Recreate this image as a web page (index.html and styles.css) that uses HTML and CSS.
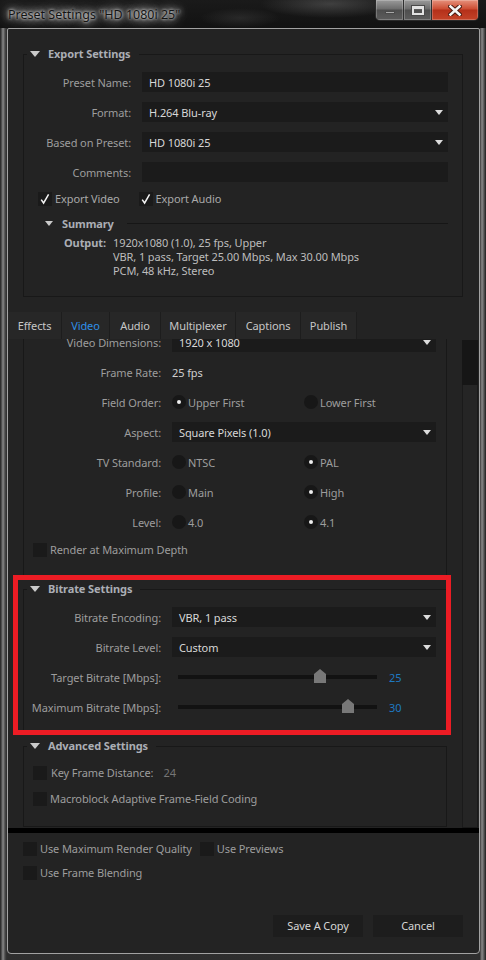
FILE: index.html
```html
<!DOCTYPE html>
<html>
<head>
<meta charset="utf-8">
<title>Preset Settings</title>
<link rel="stylesheet" href="styles.css">
</head>
<body>
<div class="window">
  <div class="titlebar">
    <div class="title">Preset Settings "HD 1080i 25"</div>
    <div class="caption">
      <div class="cb cb-min"><i class="min-ico"></i></div>
      <div class="cb cb-max"><i class="max-ico"></i></div>
      <div class="cb cb-close">
        <svg width="14" height="11" viewBox="0 0 14 11"><path d="M2.5 1.5 L11.5 9.5 M11.5 1.5 L2.5 9.5" stroke="#4a1a10" stroke-width="4.6" stroke-linecap="square"/><path d="M2.5 1.5 L11.5 9.5 M11.5 1.5 L2.5 9.5" stroke="#f4f4f4" stroke-width="2.6" stroke-linecap="square"/></svg>
      </div>
    </div>
  </div>

  <div class="client">
    <fieldset class="group export">
      <legend class="legend"><span class="tri"></span>Export Settings</legend>
      <div class="rows">
        <div class="row"><span class="lbl">Preset Name:</span><div class="field">HD 1080i 25</div></div>
        <div class="row"><span class="lbl">Format:</span><div class="field">H.264 Blu-ray<span class="arrow"></span></div></div>
        <div class="row"><span class="lbl">Based on Preset:</span><div class="field">HD 1080i 25<span class="arrow"></span></div></div>
        <div class="row"><span class="lbl">Comments:</span><div class="field"></div></div>
      </div>
      <div class="export-checks">
        <div class="chk"><span class="box"><svg width="14" height="14" viewBox="0 0 14 14"><path d="M3.2 7.6 L5.6 11 L10.6 2.4" fill="none" stroke="#f2f2f2" stroke-width="1.5"/></svg></span>Export Video</div>
        <div class="chk"><span class="box"><svg width="14" height="14" viewBox="0 0 14 14"><path d="M3.2 7.6 L5.6 11 L10.6 2.4" fill="none" stroke="#f2f2f2" stroke-width="1.5"/></svg></span>Export Audio</div>
      </div>
      <div class="summary">
        <div class="summary-head"><span class="tri small"></span><span class="bold">Summary</span><span class="rule"></span></div>
        <div class="output">
          <span class="out-lbl">Output:</span>
          <div class="out-lines">
            <div>1920x1080 (1.0), 25 fps, Upper</div>
            <div>VBR, 1 pass, Target 25.00 Mbps, Max 30.00 Mbps</div>
            <div>PCM, 48 kHz, Stereo</div>
          </div>
        </div>
      </div>
    </fieldset>

    <div class="tabs">
      <div class="tab t1">Effects</div>
      <div class="tab t2 active">Video</div>
      <div class="tab t3">Audio</div>
      <div class="tab t4">Multiplexer</div>
      <div class="tab t5">Captions</div>
      <div class="tab t6">Publish</div>
    </div>

    <div class="panel">
      <div class="scroll">
        <div class="vgroup">
          <div class="rows vrows">
            <div class="row"><span class="lbl">Video Dimensions:</span><div class="field">1920 x 1080<span class="arrow"></span></div></div>
            <div class="row"><span class="lbl">Frame Rate:</span><span class="val">25 fps</span></div>
            <div class="row"><span class="lbl">Field Order:</span>
              <div class="radios"><div class="radio"><span class="dot on"></span>Upper First</div><div class="radio"><span class="dot"></span>Lower First</div></div></div>
            <div class="row"><span class="lbl">Aspect:</span><div class="field">Square Pixels (1.0)<span class="arrow"></span></div></div>
            <div class="row"><span class="lbl">TV Standard:</span>
              <div class="radios"><div class="radio"><span class="dot"></span>NTSC</div><div class="radio"><span class="dot on"></span>PAL</div></div></div>
            <div class="row"><span class="lbl">Profile:</span>
              <div class="radios"><div class="radio"><span class="dot"></span>Main</div><div class="radio"><span class="dot on"></span>High</div></div></div>
            <div class="row"><span class="lbl">Level:</span>
              <div class="radios"><div class="radio"><span class="dot"></span>4.0</div><div class="radio"><span class="dot on"></span>4.1</div></div></div>
          </div>
          <div class="chk inner-chk render"><span class="box"></span>Render at Maximum Depth</div>
        </div>

        <fieldset class="group bitrate">
          <legend class="legend"><span class="tri"></span>Bitrate Settings</legend>
          <div class="rows vrows">
            <div class="row"><span class="lbl">Bitrate Encoding:</span><div class="field">VBR, 1 pass<span class="arrow"></span></div></div>
            <div class="row"><span class="lbl">Bitrate Level:</span><div class="field">Custom<span class="arrow"></span></div></div>
            <div class="row"><span class="lbl">Target Bitrate [Mbps]:</span>
              <div class="slider-wrap"><div class="slider"><svg class="knob" style="left:136px" width="12" height="14" viewBox="0 0 12 14"><path d="M0 5 L6 0 L12 5 V14 H0 Z" fill="#787878"/></svg></div><span class="sval">25</span></div></div>
            <div class="row"><span class="lbl">Maximum Bitrate [Mbps]:</span>
              <div class="slider-wrap"><div class="slider"><svg class="knob" style="left:164px" width="12" height="14" viewBox="0 0 12 14"><path d="M0 5 L6 0 L12 5 V14 H0 Z" fill="#787878"/></svg></div><span class="sval">30</span></div></div>
          </div>
        </fieldset>

        <fieldset class="group advanced">
          <legend class="legend"><span class="tri"></span>Advanced Settings</legend>
          <div class="adv-rows">
            <div class="chk inner-chk"><span class="box"></span><span class="kfd">Key Frame Distance:</span><span class="dim">24</span></div>
            <div class="chk inner-chk"><span class="box"></span>Macroblock Adaptive Frame-Field Coding</div>
          </div>
        </fieldset>
      </div>
      <div class="scrollbar"><div class="thumb"></div><div class="track"></div></div>
    </div>

    <div class="bottom">
      <div class="brow">
        <div class="chk"><span class="box"></span>Use Maximum Render Quality</div>
        <div class="chk"><span class="box"></span>Use Previews</div>
      </div>
      <div class="brow second">
        <div class="chk"><span class="box"></span>Use Frame Blending</div>
      </div>
      <div class="buttons">
        <div class="btn">Save A Copy</div>
        <div class="btn">Cancel</div>
      </div>
    </div>
  </div>

  <div class="annot"></div>
</div>
</body>
</html>
```
FILE: styles.css
```css
* { box-sizing: border-box; }
html, body { margin: 0; padding: 0; }
body {
  width: 486px;
  height: 960px;
  overflow: hidden;
  font-family: "Noto Sans", "Open Sans", sans-serif;
  font-size: 11px;
  letter-spacing: -0.1px;
  color: #9d9d9d;
  background: #2c2c2c;
}

.window {
  position: relative;
  width: 486px;
  height: 960px;
  display: flex;
  flex-direction: column;
  padding: 0 6px 6px 7px;
  background:
    linear-gradient(90deg, #1e1e1e 0, #5e5e5e 2px, #8a8a8a 3px, #4a4a4a 5px, #2a2a2a 7px, transparent 7px, transparent 480px, #3a3a3a 480px, #8a8a8a 482px, #555 484px, #1e1e1e 486px),
    linear-gradient(180deg, #2a2a2a 0, #3c3c3c 40%, #4a4a4a 60%, #2e2e2e 100%);
}

/* Title bar */
.titlebar {
  height: 28px;
  flex: none;
  display: flex;
  justify-content: space-between;
  align-items: flex-start;
  margin: 0 -6px 0 -7px;
  padding: 0 7px 0 8px;
  background:
    radial-gradient(ellipse 70px 14px at 330px 4px, rgba(110,110,110,0.45), transparent),
    radial-gradient(ellipse 40px 10px at 240px 18px, rgba(60,60,60,0.5), transparent),
    linear-gradient(180deg, #1a1a1a, #121212);
}
.title {
  font-size: 12.5px;
  letter-spacing: 0;
  line-height: 29px;
  color: #141414;
  white-space: nowrap;
  text-shadow: 0 0 3px #fff, 0 0 7px #e8e8e8, 0 0 12px #bdbdbd, 0 0 18px #9a9a9a;
}
.caption {
  display: flex;
  height: 21px;
  border: 1px solid #2a2a2a;
  border-top: none;
  border-radius: 0 0 5px 5px;
  overflow: hidden;
}
.cb {
  height: 20px;
  display: flex;
  align-items: center;
  justify-content: center;
  box-shadow: inset 0 0 0 1px rgba(255,255,255,0.22);
}
.cb-min, .cb-max {
  width: 28px;
  background: linear-gradient(180deg, #9a9a9a 0, #6c6c6c 45%, #4e4e4e 50%, #5c5c5c 100%);
  border-right: 1px solid #2f2f2f;
}
.cb-close {
  width: 46px;
  background: linear-gradient(180deg, #e6917c 0, #cc4c32 45%, #b5301a 50%, #c44328 100%);
}
.min-ico {
  display: block;
  width: 10px;
  height: 3px;
  margin-top: 4px;
  background: #a8a8a8;
  border: 1px solid #4a4a4a;
}
.max-ico {
  display: block;
  width: 12px;
  height: 9px;
  border: 2px solid #e2e2e2;
  border-top-width: 3px;
  outline: 1px solid #4a4a4a;
}

/* Client */
.client {
  flex: 1;
  display: flex;
  flex-direction: column;
  background: #232323;
  border: 1px solid #a2a2a2;
  border-radius: 2px 2px 4px 4px;
  overflow: hidden;
}

.group {
  margin: 0;
  padding: 0;
  border: 1px solid #181818;
  min-width: 0;
}
.legend {
  display: flex;
  align-items: center;
  height: 14px;
  line-height: 14px;
  margin-left: 3px;
  padding: 0 8px 0 3px;
  font-weight: bold;
  color: #abaeb5;
}
.tri {
  width: 0;
  height: 0;
  border-left: 5px solid transparent;
  border-right: 5px solid transparent;
  border-top: 6px solid #cacaca;
  margin-right: 8px;
}
.tri.small {
  border-left-width: 4px;
  border-right-width: 4px;
  border-top-width: 5px;
  margin-right: 9px;
}
.bold { font-weight: bold; color: #abaeb5; }

.export {
  margin: 18px 16px 0 15px;
  padding: 0 0 18px 0;
}
.rows {
  display: flex;
  flex-direction: column;
  gap: 10px;
  padding-top: 11px;
  padding-right: 14px;
}
.row {
  display: flex;
  align-items: center;
  height: 20px;
  gap: 11px;
}
.lbl {
  flex: none;
  width: 107px;
  text-align: right;
  white-space: nowrap;
}
.field {
  flex: 1;
  height: 20px;
  display: flex;
  align-items: center;
  justify-content: space-between;
  padding: 0 5px 0 7px;
  background: #1b1b1b;
  color: #d8d8d8;
  white-space: nowrap;
}
.arrow {
  width: 0;
  height: 0;
  border-left: 4.5px solid transparent;
  border-right: 4.5px solid transparent;
  border-top: 5px solid #dcdcdc;
}
.val { color: #cfcfcf; }

.export-checks {
  display: flex;
  gap: 19px;
  margin-top: 10px;
  padding-left: 14px;
  height: 14px;
}
.chk {
  display: flex;
  align-items: center;
  gap: 3px;
  height: 14px;
  line-height: 14px;
  white-space: nowrap;
}
.export-checks .chk { color: #a9a9a9; }
.box {
  flex: none;
  width: 14px;
  height: 14px;
  background: #1a1a1a;
  display: flex;
}

.summary { margin-top: 10px; }
.summary-head {
  display: flex;
  align-items: center;
  height: 14px;
  padding: 0 14px 0 21px;
}
.rule {
  flex: 1;
  height: 1px;
  background: #161616;
  margin-left: 13px;
}
.output {
  display: flex;
  margin-top: 6px;
  padding-left: 40px;
  line-height: 14px;
}
.out-lbl {
  flex: none;
  width: 49px;
  font-weight: bold;
  color: #abaeb5;
}
.out-lines { color: #bdbdbd; }

/* Tabs */
.tabs {
  flex: none;
  display: flex;
  height: 27px;
  margin-top: 15px;
}
.tab {
  line-height: 27px;
  text-align: center;
  background: #272727;
  border-right: 1px solid #1d1d1d;
  color: #c6c6c6;
  white-space: nowrap;
}
.t1 { width: 54px; }
.t2 { width: 48px; }
.t3 { width: 51px; }
.t4 { width: 75px; }
.t5 { width: 65px; }
.t6 { width: 56px; }
.tab.active { color: #2f8fe6; }

/* Scroll panel */
.panel {
  flex: none;
  display: flex;
  height: 494px;
  border-bottom: 5px solid #000;
}
.scroll {
  flex: 1;
  min-width: 0;
  overflow: hidden;
}
.scrollbar {
  flex: none;
  width: 16px;
  margin-right: 1px;
  display: flex;
  flex-direction: column;
  padding-top: 1px;
}
.thumb {
  height: 45px;
  background: #161616;
}
.track {
  flex: 1;
  background: #252525;
  border: 1px solid #1a1a1a;
  border-top: none;
}

.vgroup {
  margin: -7px 15px 0 15px;
  border: 1px solid #181818;
  border-top: none;
  padding: 0 0 18px 0;
}
.vrows {
  padding-top: 0;
  padding-right: 10px;
}
.vrows .lbl { width: 137px; }
.radios { display: flex; }
.radio {
  width: 132px;
  display: flex;
  align-items: center;
  gap: 2px;
  white-space: nowrap;
}
.dot {
  flex: none;
  width: 14px;
  height: 14px;
  border-radius: 50%;
  background: #171717;
  position: relative;
}
.dot.on::after {
  content: "";
  position: absolute;
  left: 5px;
  top: 5px;
  width: 4px;
  height: 4px;
  border-radius: 50%;
  background: #eeeeee;
}
.inner-chk { padding-left: 9px; }
.render { margin-top: 11px; }

.bitrate {
  margin: 6px 15px 0 15px;
  padding: 0 0 16px 0;
}
.bitrate .vrows { padding-top: 11px; }
.slider-wrap {
  display: flex;
  align-items: center;
}
.slider {
  position: relative;
  width: 199px;
  height: 4px;
  margin-left: 6px;
  background: #121212;
}
.knob {
  position: absolute;
  top: -6px;
}
.sval {
  margin-left: 12px;
  color: #1e79c2;
}

.advanced {
  margin: 5px 15px 0 15px;
  padding: 0 0 20px 0;
}
.adv-rows {
  display: flex;
  flex-direction: column;
  gap: 12px;
  padding-top: 13px;
}
.kfd { margin-left: 1px; }
.dim { margin-left: 7px; color: #767676; }

/* Bottom */
.bottom {
  flex: 1;
  display: flex;
  flex-direction: column;
  padding: 9px 16px 16px 15px;
}
.brow {
  display: flex;
  gap: 8px;
  height: 14px;
}
.brow.second { margin-top: 10px; }
.buttons {
  margin-top: auto;
  display: flex;
  justify-content: flex-end;
  gap: 10px;
}
.btn {
  width: 90px;
  height: 22px;
  line-height: 22px;
  text-align: center;
  background: #1d1d1d;
  color: #d6d6d6;
}

/* Annotation highlight */
.annot {
  position: absolute;
  left: 13px;
  top: 575px;
  width: 438px;
  height: 160px;
  border: 5px solid #ec1c24;
  pointer-events: none;
}
```
